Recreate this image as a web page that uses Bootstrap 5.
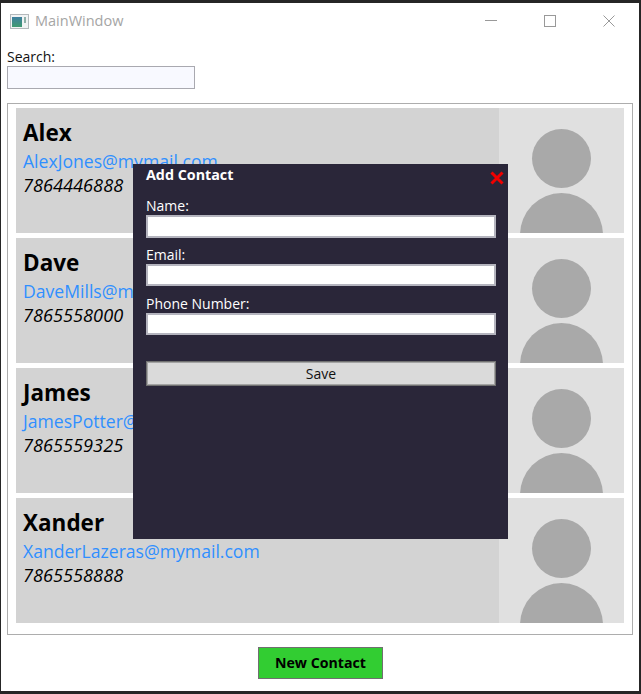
<!DOCTYPE html>
<html lang="en">

<head>
    <meta charset="UTF-8">
    <meta name="viewport" content="width=device-width, initial-scale=1.0">
    <title>MainWindow</title>
    <link href="https://cdn.jsdelivr.net/npm/bootstrap@5.3.3/dist/css/bootstrap.min.css" rel="stylesheet">
    <style>
        body {
            background: #fff;
            font-family: "Open Sans", "Liberation Sans", sans-serif;
        }

        #win {
            position: relative;
            width: 641px;
            height: 694px;
            border-style: solid;
            border-color: #262626;
            border-width: 3px 2px 3px 1px;
            overflow: hidden;
        }

        #titlebar {
            height: 38px;
            padding: 0 0 2px 9px;
            color: #a5a5a5;
            font-size: 14.5px;
        }

        #titlebar .app-icon {
            margin-right: 6px;
        }

        #winbtns {
            gap: 47px;
            padding-right: 24px;
            margin-left: auto;
        }

        #search {
            padding: 7px 0 0 6px;
            font-size: 14px;
            line-height: 18px;
            color: #111;
        }

        #search .form-control {
            width: 188px;
            height: 23px;
            padding: 0 3px;
            background: #f8f9ff;
            border: 1px solid #a9a9b0;
            border-radius: 0;
        }

        #contacts {
            width: 626px;
            height: 532px;
            margin: 14px 0 0 6px;
            padding: 4px 8px;
            border: 1px solid #adadad;
            border-radius: 0;
        }

        #contacts .person {
            height: 125px;
            margin-bottom: 5px;
            background: #d3d3d3;
            border: 0;
            border-radius: 0;
        }

        .person .info {
            width: 483px;
            padding: 8px 7px;
        }

        .person h2 {
            margin: 0;
            font-size: 22.5px;
            font-weight: 700;
            line-height: 33px;
            color: #000;
        }

        .person .mail {
            font-size: 17.6px;
            line-height: 24px;
            color: #2f8fff;
        }

        .person .phone {
            font-size: 18.2px;
            line-height: 24px;
            font-style: italic;
            color: #000;
        }

        .person .pic {
            width: 125px;
            background: #e0e0e0;
        }

        #footer {
            padding-top: 12px;
        }

        #newbtn {
            width: 125px;
            height: 32px;
            margin-left: 257px;
            padding: 0;
            background: #32cd32;
            border: 1px solid #707070;
            border-radius: 0;
            color: #000;
            font-size: 14.2px;
            font-weight: 700;
        }

        #addbox {
            position: absolute;
            left: 132px;
            top: 161px;
            width: 375px;
            height: 375px;
            padding: 0 12px 0 13px;
            background: #2a2639;
            color: #fff;
            font-size: 14px;
        }

        #addbox h6 {
            margin: 0 0 13px;
            padding-top: 1px;
            font-size: 14.3px;
            font-weight: 700;
            line-height: 19px;
        }

        #closex {
            position: absolute;
            right: 4px;
            top: 7px;
        }

        #addbox label {
            display: block;
            line-height: 18px;
        }

        #addbox .form-control {
            width: 350px;
            height: 22px;
            padding: 0 3px;
            margin-bottom: 9px;
            background: #fff;
            border: 2px solid #b4b4be;
            border-radius: 0;
        }

        #addbox label:first-child + .form-control {
            height: 23px;
            margin-bottom: 8px;
        }

        #savebtn {
            display: block;
            width: 350px;
            height: 25px;
            margin-top: 26px;
            padding: 0;
            background: #dadada;
            border: 1px solid #707070;
            box-shadow: inset 0 0 0 1px #a3a3a3;
            border-radius: 0;
            color: #111;
            font-size: 14px;
        }
    </style>
</head>

<body>
    <div id="win">
        <div id="titlebar" class="d-flex align-items-center">
            <svg class="app-icon" width="19" height="15" viewBox="0 0 19 15">
                <defs>
                    <linearGradient id="tile" x1="0" y1="0" x2="0" y2="1">
                        <stop offset="0" stop-color="#3f7fa0" />
                        <stop offset="1" stop-color="#3f9a70" />
                    </linearGradient>
                </defs>
                <rect x="0.5" y="0.5" width="18" height="14" fill="#f1f3f4" stroke="#b4b9bc" />
                <rect x="2" y="3" width="10" height="10" fill="url(#tile)" />
                <rect x="14" y="3" width="2" height="6" fill="#8fb0a8" />
            </svg>
            <span>MainWindow</span>
            <div id="winbtns" class="d-flex align-items-center">
                <svg width="12" height="12" viewBox="0 0 12 12">
                    <path d="M0 5.5H12" stroke="#999" fill="none" />
                </svg>
                <svg width="12" height="12" viewBox="0 0 12 12">
                    <rect x="0.5" y="0.5" width="11" height="11" stroke="#999" fill="none" />
                </svg>
                <svg width="12" height="12" viewBox="0 0 12 12">
                    <path d="M0.5 0.5L11.5 11.5M11.5 0.5L0.5 11.5" stroke="#999" fill="none" />
                </svg>
            </div>
        </div>

        <div id="search">
            <div>Search:</div>
            <input type="text" class="form-control">
        </div>

        <div id="contacts" class="list-group">
            <div class="person list-group-item d-flex p-0">
                <div class="info">
                    <h2>Alex</h2>
                    <div class="mail">AlexJones@mymail.com</div>
                    <div class="phone">7864446888</div>
                </div>
                <div class="pic">
                    <svg width="125" height="125" viewBox="0 0 125 125">
                        <circle cx="62.5" cy="50.5" r="29.5" fill="#a9a9a9" />
                        <ellipse cx="62.5" cy="127" rx="41.5" ry="42" fill="#a9a9a9" />
                    </svg>
                </div>
            </div>
            <div class="person list-group-item d-flex p-0">
                <div class="info">
                    <h2>Dave</h2>
                    <div class="mail">DaveMills@mymail.com</div>
                    <div class="phone">7865558000</div>
                </div>
                <div class="pic">
                    <svg width="125" height="125" viewBox="0 0 125 125">
                        <circle cx="62.5" cy="50.5" r="29.5" fill="#a9a9a9" />
                        <ellipse cx="62.5" cy="127" rx="41.5" ry="42" fill="#a9a9a9" />
                    </svg>
                </div>
            </div>
            <div class="person list-group-item d-flex p-0">
                <div class="info">
                    <h2>James</h2>
                    <div class="mail">JamesPotter@mymail.com</div>
                    <div class="phone">7865559325</div>
                </div>
                <div class="pic">
                    <svg width="125" height="125" viewBox="0 0 125 125">
                        <circle cx="62.5" cy="50.5" r="29.5" fill="#a9a9a9" />
                        <ellipse cx="62.5" cy="127" rx="41.5" ry="42" fill="#a9a9a9" />
                    </svg>
                </div>
            </div>
            <div class="person list-group-item d-flex p-0">
                <div class="info">
                    <h2>Xander</h2>
                    <div class="mail">XanderLazeras@mymail.com</div>
                    <div class="phone">7865558888</div>
                </div>
                <div class="pic">
                    <svg width="125" height="125" viewBox="0 0 125 125">
                        <circle cx="62.5" cy="50.5" r="29.5" fill="#a9a9a9" />
                        <ellipse cx="62.5" cy="127" rx="41.5" ry="42" fill="#a9a9a9" />
                    </svg>
                </div>
            </div>
        </div>

        <div id="footer">
            <button id="newbtn" class="btn">New Contact</button>
        </div>

        <!-- popup over the list -->
        <div id="addbox">
            <h6>Add Contact</h6>
            <svg id="closex" width="14" height="14" viewBox="0 0 14 14">
                <path d="M1.5 1.5L12.5 12.5M12.5 1.5L1.5 12.5" stroke="#f00000" stroke-width="3" fill="none" />
            </svg>
            <div>
                <label>Name:</label>
                <input type="text" class="form-control">
                <label>Email:</label>
                <input type="text" class="form-control">
                <label>Phone Number:</label>
                <input type="text" class="form-control">
            </div>
            <button id="savebtn" class="btn">Save</button>
        </div>
    </div>

    <script src="https://cdn.jsdelivr.net/npm/bootstrap@5.3.3/dist/js/bootstrap.bundle.min.js"></script>
</body>

</html>
